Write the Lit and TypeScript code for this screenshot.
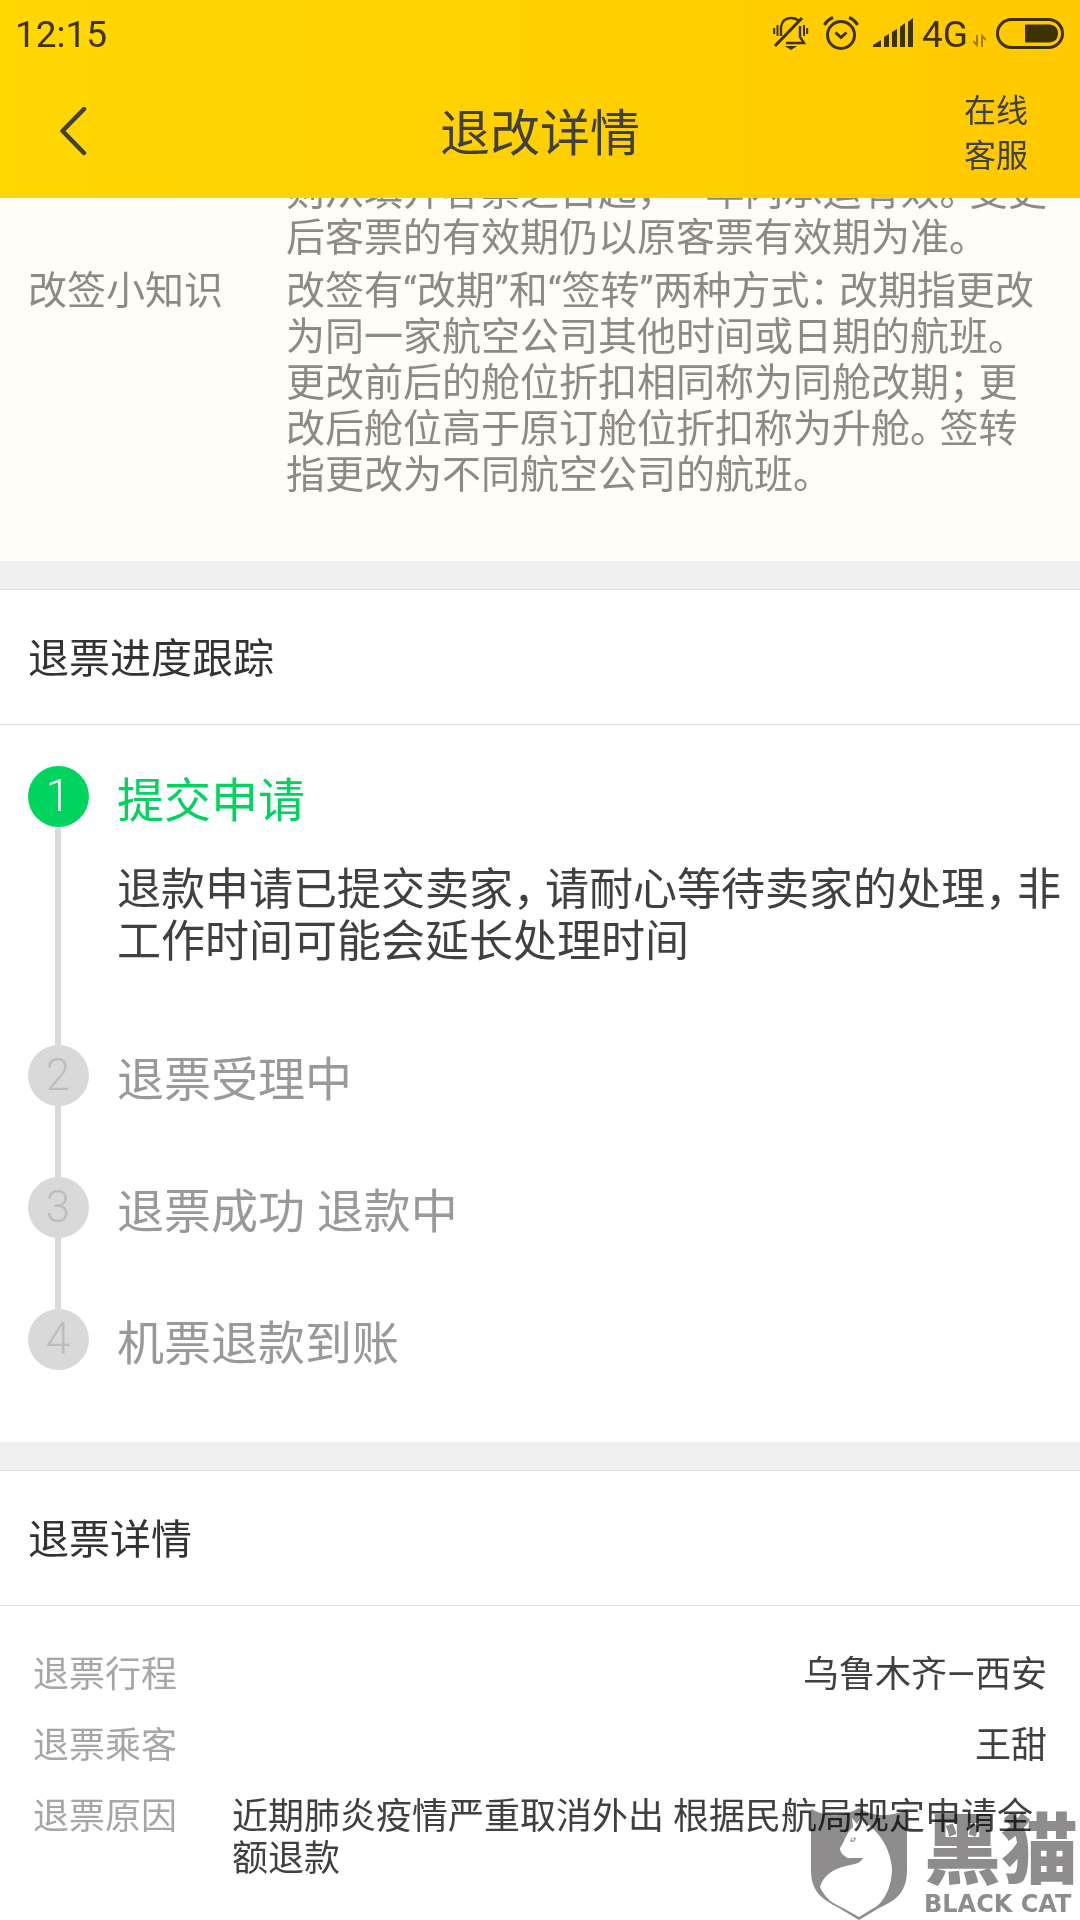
import { LitElement, html, css } from "lit";
import { customElement } from "lit/decorators.js";

/* Wraps full-width punctuation so that it is set at the narrower advance. */
const typeset = (text: string) =>
  text.split(/([，：；。])/).map((part) =>
    /^[，：；。]$/.test(part) ? html`<span class="mark">${part}</span>` : part
  );

const punctuation = css`
  .mark {
    font-feature-settings: "halt";
    padding-right: 10px;
  }
`;

const reset = css`
  :host {
    display: block;
  }
  * {
    box-sizing: border-box;
    margin: 0;
    padding: 0;
  }
`;

@customElement("status-bar")
class StatusBar extends LitElement {
  static styles = [
    reset,
    css`
      .bar {
        display: flex;
        align-items: center;
        justify-content: space-between;
        height: 66px;
        padding: 0 16px 0 15px;
        color: #3e3300;
        font-size: 37px;
        line-height: 44px;
      }
      time,
      .network {
        padding-top: 4px;
      }
      .icons {
        display: flex;
        align-items: center;
      }
      .network {
        margin-left: 8px;
      }
      svg {
        display: block;
      }
      .alarm {
        margin-left: 14px;
      }
      .signal {
        margin-left: 14px;
      }
      .data {
        margin-left: 5px;
      }
      .battery {
        margin-left: 10px;
      }
    `,
  ];
  render() {
    return html`<div class="bar">
      <time>12:15</time>
      <div class="icons">
        <svg width="36" height="34" viewBox="0 0 36 34" fill="none" stroke="#3e3300" stroke-width="2.4" aria-hidden="true">
          <path d="M8 20V11C9 5 13 2 18 2C21 2 24 3 26 5M13 27H31L27 21V10" />
          <path d="M2 30L29 2" stroke-width="3" />
          <path d="M1.200 12v6M4.500 9v11M31 9v11M34.200 12v6" stroke-width="2" />
          <path d="M12 30H24L18 34Z" fill="#3e3300" stroke="none" />
        </svg>
        <svg class="alarm" width="36" height="36" viewBox="0 0 36 36" fill="none" stroke="#3e3300" stroke-width="3" aria-hidden="true">
          <circle cx="18" cy="20" r="13.500" />
          <path d="M12.500 17.500L18 22.500L23.500 17.500M1.500 10Q4 5 10 2.500M34.500 10Q32 5 26 2.500" />
        </svg>
        <svg class="signal" width="41" height="30" viewBox="0 0 41 30" fill="#3e3300" aria-hidden="true">
          <path d="M0 29V27L8 22V29ZM11 29V19L16 16V29ZM19 29V14L24 11V29ZM27 29V9L32 5V29ZM35 29V4L40 0V29Z" />
        </svg>
        <span class="network">4G</span>
        <svg class="data" width="13" height="32" viewBox="0 0 13 32" fill="none" stroke="#a08000" stroke-width="2" aria-hidden="true">
          <path d="M4 18V28L0 24M9 30V19L13 23" />
        </svg>
        <svg class="battery" width="68" height="31" viewBox="0 0 68 31" aria-hidden="true">
          <rect x="1.500" y="1.500" width="65" height="28" rx="14" fill="none" stroke="#3e3300" stroke-width="3" />
          <path d="M30 6.500H54Q62 7.500 62 15.500T54 24.500H30Q29 24.500 29 23.500V7.500Q29 6.500 30 6.500Z" fill="#3e3300" />
        </svg>
      </div>
    </div>`;
  }
}

@customElement("nav-bar")
class NavBar extends LitElement {
  static styles = [
    reset,
    css`
      .nav {
        display: grid;
        grid-template-columns: 1fr auto 1fr;
        align-items: center;
        height: 132px;
        padding: 0 52px;
        color: #404040;
      }
      button {
        border: 0;
        background: none;
        color: inherit;
        font: inherit;
        cursor: pointer;
      }
      .back {
        justify-self: start;
        padding: 0 8px;
      }
      .back svg {
        display: block;
      }
      h1 {
        padding-top: 4px;
        font-size: 50px;
        line-height: 64px;
        font-weight: 400;
      }
      .service {
        justify-self: end;
        width: 64px;
        padding-top: 4px;
        font-size: 32px;
        line-height: 45px;
      }
    `,
  ];
  render() {
    return html`<nav class="nav">
      <button class="back" aria-label="返回">
        <svg width="28" height="50" viewBox="0 0 28 50" fill="none" stroke="#404040" stroke-width="4.500" stroke-linecap="round" stroke-linejoin="round">
          <path d="M24 2L2.500 24L24 46" />
        </svg>
      </button>
      <h1>退改详情</h1>
      <button class="service">在线客服</button>
    </nav>`;
  }
}

@customElement("change-notes")
class ChangeNotes extends LitElement {
  static styles = [
    reset,
    punctuation,
    css`
      .clip {
        display: flex;
        flex-direction: column;
        justify-content: flex-end;
        height: 363px;
        overflow: hidden;
        background: #fffdf5;
        color: #8c8a85;
        padding: 0 30px 63px 28px;
      }
      .row {
        display: grid;
        grid-template-columns: 258px 1fr;
        font-size: 39px;
        line-height: 46px;
        flex: none;
      }
      .row + .row {
        margin-top: 7px;
      }
    `,
  ];
  render() {
    return html`<dl class="clip">
      <div class="row">
        <dt></dt>
        <dd>${typeset("则从填开客票之日起，一年内承运有效。变更后客票的有效期仍以原客票有效期为准。")}</dd>
      </div>
      <div class="row">
        <dt>改签小知识</dt>
        <dd>
          ${typeset("改签有“改期”和“签转”两种方式：改期指更改为同一家航空公司其他时间或日期的航班。更改前后的舱位折扣相同称为同舱改期；更改后舱位高于原订舱位折扣称为升舱。签转指更改为不同航空公司的航班。")}
        </dd>
      </div>
    </dl>`;
  }
}

@customElement("section-card")
class SectionCard extends LitElement {
  static properties = { heading: {} };
  declare heading: string;
  static styles = [
    reset,
    css`
      .card {
        border-top: 28px solid #f0f0f0;
        background: #fff;
      }
      h2 {
        border: solid #e1e1e1;
        border-width: 1px 0;
        padding: 39px 28px 35px;
        color: #333;
        font-size: 41px;
        line-height: 60px;
        font-weight: 400;
      }
    `,
  ];
  render() {
    return html`<section class="card">
      <h2>${this.heading}</h2>
      <slot></slot>
    </section>`;
  }
}

const steps = [
  { title: "提交申请", text: "退款申请已提交卖家，请耐心等待卖家的处理，非工作时间可能会延长处理时间" },
  { title: "退票受理中" },
  { title: "退票成功 退款中" },
  { title: "机票退款到账" },
];

@customElement("refund-steps")
class RefundSteps extends LitElement {
  static styles = [
    reset,
    punctuation,
    css`
      ol {
        list-style: none;
        padding: 41px 8px 64px 28px;
      }
      .step {
        display: grid;
        grid-template-columns: 60px 1fr;
        column-gap: 29px;
        color: #999;
      }
      .rail {
        display: flex;
        flex-direction: column;
        align-items: center;
      }
      .dot {
        flex: none;
        width: 61px;
        height: 61px;
        border-radius: 50%;
        background: #d9d9d9;
        color: #bdbdbd;
        text-align: center;
        font-size: 44px;
        line-height: 60px;
        font-weight: 300;
      }
      .line {
        flex: 1;
        width: 6px;
        background: #d9d9d9;
      }
      .body {
        padding-bottom: 63px;
      }
      .step:last-child .body {
        padding-bottom: 0;
      }
      h3 {
        padding-top: 1px;
        font-size: 47px;
        line-height: 68px;
        font-weight: 400;
      }
      p {
        color: #404040;
        font-size: 44px;
        line-height: 52px;
        padding: 29px 0 14px;
      }
      .active .dot {
        background: #00d35e;
        color: #fff;
      }
      .active h3 {
        color: #00d35e;
      }
    `,
  ];
  render() {
    return html`<ol>
      ${steps.map(
        (s, i) => html`<li class="step ${i === 0 ? "active" : ""}">
          <div class="rail">
            <span class="dot">${i + 1}</span>
            ${i < steps.length - 1 ? html`<span class="line"></span>` : ""}
          </div>
          <div class="body">
            <h3>${s.title}</h3>
            ${s.text ? html`<p>${typeset(s.text)}</p>` : ""}
          </div>
        </li>`
      )}
    </ol>`;
  }
}

const details = [
  ["退票行程", "乌鲁木齐—西安"],
  ["退票乘客", "王甜"],
  ["退票原因", "近期肺炎疫情严重取消外出 根据民航局规定申请全额退款"],
];

@customElement("refund-details")
class RefundDetails extends LitElement {
  static styles = [
    reset,
    css`
      dl {
        display: flex;
        flex-direction: column;
        gap: 29px;
        padding: 48px 33px 24px 33px;
        font-size: 36px;
        line-height: 42px;
      }
      .row {
        display: grid;
        grid-template-columns: 199px 1fr;
      }
      dt {
        color: #a6a6a6;
      }
      dd {
        justify-self: end;
        color: #404040;
      }
    `,
  ];
  render() {
    return html`<dl>
      ${details.map(([k, v]) => html`<div class="row"><dt>${k}</dt><dd>${v}</dd></div>`)}
    </dl>`;
  }
}

@customElement("brand-mark")
class BrandMark extends LitElement {
  static styles = [
    reset,
    css`
      .mark {
        display: flex;
        gap: 16px;
        color: #8f8c8d;
      }
      svg {
        display: block;
      }
      .name {
        font-size: 77px;
        line-height: 76px;
        font-weight: 900;
        padding-top: 6px;
      }
      .latin {
        font-family: "DejaVu Sans", sans-serif;
        font-size: 24px;
        line-height: 28px;
        font-weight: 700;
      }
    `,
  ];
  render() {
    return html`<div class="mark">
      <svg width="98" height="112" viewBox="0 0 98 112" aria-hidden="true">
        <path
          fill="currentColor"
          fill-rule="evenodd"
          d="M1 1Q26 14 49 0Q72 14 97 1V62C97 86 84 93 69 100L49 112L29 100C12 91 1 84 1 62ZM42 10L43 19C38 24 36 28 34 33Q32 37 30 40C30 45 34 48 38 50H53C50 56 44 56 36 58C23 61 13 68 10 79C16 92 24 96 33 100L49 109L67 98C76 91 82 76 82 60C80 42 72 28 60 18L51 9L47 16Z"
        />
        <path d="M40 33Q42 28 46 30Q44 36 40 33Z" fill="currentColor" />
        <path d="M42 32L44 31" stroke="#fff" stroke-width="2" />
      </svg>
      <div>
        <div class="name">黑猫</div>
        <div class="latin">BLACK CAT</div>
      </div>
    </div>`;
  }
}

@customElement("app-root")
class AppRoot extends LitElement {
  static styles = [
    reset,
    css`
      :host {
        position: relative;
        min-height: 100vh;
        overflow: hidden;
        background: #fff;
        font-family: Roboto, "Noto Sans CJK SC", sans-serif;
      }
      header {
        background: linear-gradient(90deg, #ffd700, #ffca00);
      }
      .watermark {
        position: absolute;
        right: 2px;
        bottom: 0;
        mix-blend-mode: multiply;
      }
    `,
  ];
  render() {
    return html`<header>
        <status-bar></status-bar>
        <nav-bar></nav-bar>
      </header>
      <main>
        <change-notes></change-notes>
        <section-card .heading=${"退票进度跟踪"}><refund-steps></refund-steps></section-card>
        <section-card .heading=${"退票详情"}><refund-details></refund-details></section-card>
      </main>
      <brand-mark class="watermark"></brand-mark>`;
  }
}
